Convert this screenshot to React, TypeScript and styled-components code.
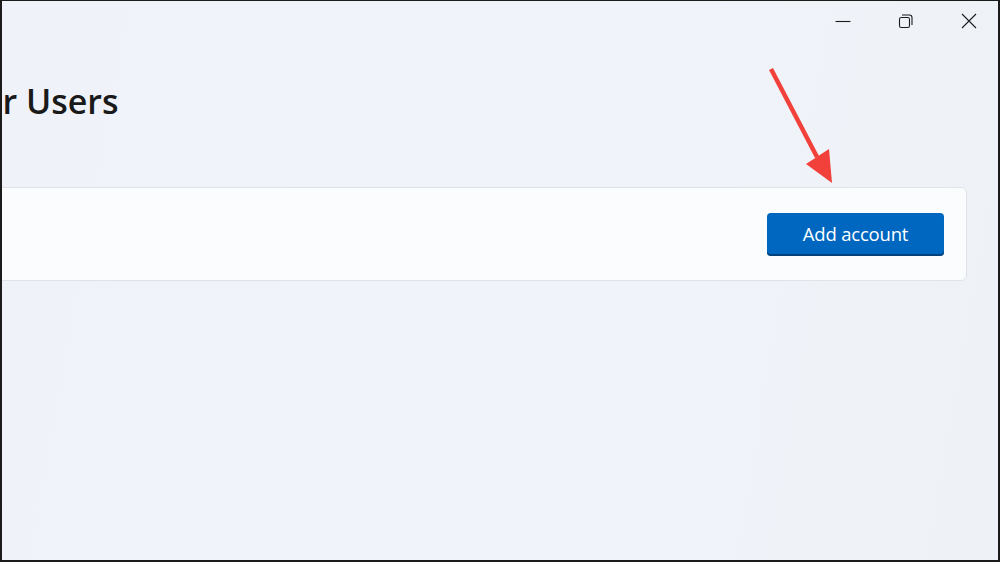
import React from "react";
import styled, { createGlobalStyle } from "styled-components";

const GlobalStyle = createGlobalStyle`
  html, body {
    margin: 0;
    padding: 0;
    width: 1000px;
    height: 562px;
    overflow: hidden;
  }
  body {
    font-family: "Open Sans", "Noto Sans", sans-serif;
  }
`;

const Frame = styled.div`
  position: relative;
  box-sizing: border-box;
  width: 1000px;
  height: 562px;
  border: 2px solid #1b1b1b;
  border-top-width: 1px;
  background: linear-gradient(100deg, #eff3f9 0%, #f0f4fa 60%, #eef2f6 100%);
  overflow: hidden;
  display: flex;
  flex-direction: column;
`;

const TitleBar = styled.div`
  display: flex;
  justify-content: flex-end;
  height: 40px;
  margin-right: -2px;
`;

const ControlButton = styled.div`
  width: 63px;
  height: 40px;
  display: flex;
  align-items: center;
  justify-content: center;
  color: #1c1c1c;
`;

const Content = styled.div`
  display: flex;
  flex-direction: column;
  margin-left: -81px;
  padding-right: 31px;
`;

const Title = styled.h1`
  margin: 37px 0 0 0;
  font-size: 34px;
  font-weight: 600;
  line-height: 46px;
  color: #1a1a1a;
  white-space: nowrap;
`;

const Card = styled.div`
  margin-top: 63px;
  height: 94px;
  box-sizing: border-box;
  display: flex;
  align-items: center;
  justify-content: flex-end;
  padding-right: 22px;
  background: #fbfcfd;
  border: 1px solid #dfe3e8;
  border-radius: 6px;
`;

const PrimaryButton = styled.button`
  width: 177px;
  height: 43px;
  border: none;
  border-radius: 4px;
  background: #0067c0;
  box-shadow: inset 0 -2px 0 #00427a;
  color: #ffffff;
  font-family: "Open Sans", "Noto Sans", sans-serif;
  font-size: 18.5px;
  letter-spacing: -0.2px;
  padding: 0 0 2px 0;
  cursor: pointer;
`;

const Arrow = styled.svg`
  position: absolute;
  left: 0;
  top: 0;
  pointer-events: none;
`;

const MinimizeIcon = () => (
  <svg width="16" height="16" viewBox="0 0 16 16">
    <path d="M0.5 8.5h15" stroke="currentColor" strokeWidth="1.1" fill="none" />
  </svg>
);

const RestoreIcon = () => (
  <svg width="16" height="16" viewBox="0 0 16 16" fill="none" stroke="currentColor" strokeWidth="1.1">
    <rect x="1.5" y="4.5" width="10" height="10" rx="1.8" />
    <path d="M4 2h7.5A2.5 2.5 0 0 1 14 4.5V12" />
  </svg>
);

const CloseIcon = () => (
  <svg width="16" height="16" viewBox="0 0 16 16" fill="none" stroke="currentColor" strokeWidth="1.1">
    <path d="M1 1l14 14M15 1L1 15" />
  </svg>
);

const App = () => {
  return (
    <>
      <GlobalStyle />
      <Frame>
        <TitleBar>
          <ControlButton>
            <MinimizeIcon />
          </ControlButton>
          <ControlButton>
            <RestoreIcon />
          </ControlButton>
          <ControlButton>
            <CloseIcon />
          </ControlButton>
        </TitleBar>
        <Content>
          <Title>Other Users</Title>
          <Card>
            <PrimaryButton>Add account</PrimaryButton>
          </Card>
        </Content>
        <Arrow width="1000" height="562" viewBox="0 0 1000 562">
          <path d="M769 68L815 156" stroke="#f2403a" strokeWidth="4.5" strokeLinecap="butt" />
          <path d="M804 163L827 148L830 182Z" fill="#f2403a" />
        </Arrow>
      </Frame>
    </>
  );
};

export default App;
